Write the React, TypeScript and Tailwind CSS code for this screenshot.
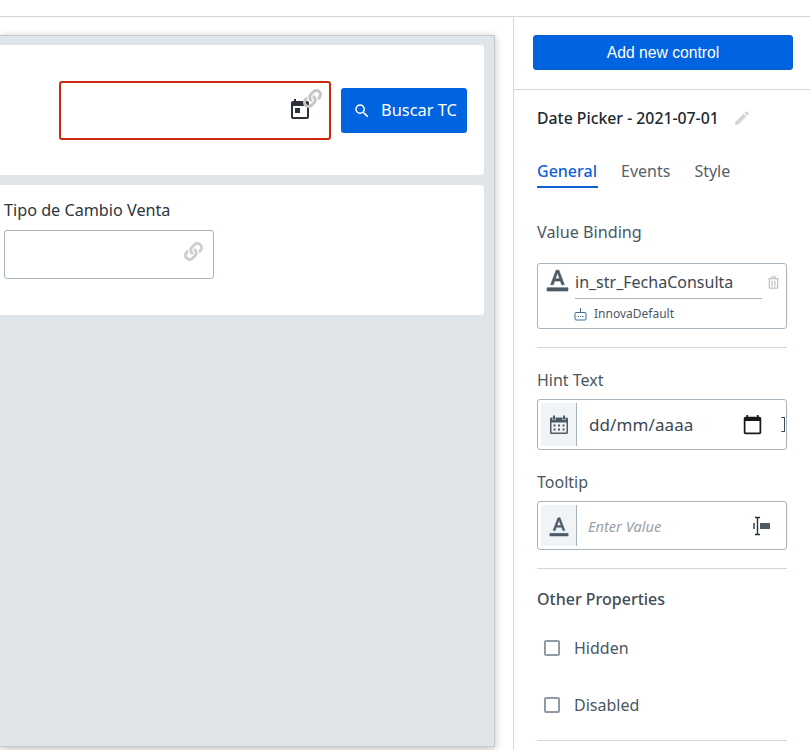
import { FaLink, FaRegTrashAlt } from 'react-icons/fa'
import { MdCalendarToday, MdEdit, MdSearch, MdToday } from 'react-icons/md'

function BotIcon() {
  return (
    <svg width="13" height="13" viewBox="0 0 13 13" fill="none" stroke="#3f6a94" strokeWidth="1">
      <path d="M6.5 0V4" />
      <rect x="1" y="4.5" width="11" height="7.5" rx="1" />
      <path d="M3.5 8.5H5M6 8.5H7M8 8.5H9.5" />
    </svg>
  )
}

function CalendarDots() {
  return (
    <svg width="20" height="20" viewBox="0 0 20 20" fill="#4d5a66">
      <rect x="4" y="0.5" width="2" height="4" />
      <rect x="14" y="0.5" width="2" height="4" />
      <path d="M2.5 2.5H3.5V5H6.5V2.5H13.5V5H16.5V2.5H17.5C18.3 2.5 19 3.2 19 4V17.5C19 18.3 18.3 19 17.5 19H2.5C1.7 19 1 18.3 1 17.5V4C1 3.2 1.7 2.5 2.5 2.5ZM2.5 7.5V17.5H17.5V7.5Z" />
      <path d="M4.5 9.5h2v2h-2zM9 9.5h2v2H9zM13.5 9.5h2v2h-2zM4.5 13.5h2v2h-2zM9 13.5h2v2H9zM13.5 13.5h2v2h-2z" />
    </svg>
  )
}

function CursorIcon() {
  return (
    <svg width="18" height="20" viewBox="0 0 18 20" fill="none">
      <rect x="7" y="7" width="10" height="6" fill="#4d5a66" />
      <path d="M2 1.5H4.5M7 1.5H4.5M4.5 1.5V18.5M2 18.5H7M1 7V13" stroke="#26323b" strokeWidth="1.4" />
    </svg>
  )
}

// text-colour icon, heavier than the stock one
function TextIcon({ size, weight }: { size: number; weight: number }) {
  return (
    <svg width={size} height={size} viewBox="0 0 24 24" fill="#4d5a66" stroke="#4d5a66" strokeWidth={weight} className="shrink-0">
      <path d="M2 20h20v3H2v-3zm3.49-3h2.42l1.27-3.58h5.65L16.09 17h2.42L13.25 3h-2.5L5.49 17zm4.42-5.61l2.03-5.79h.12l2.03 5.79H9.91z" />
    </svg>
  )
}

function Check({ label, className }: { label: string; className: string }) {
  return (
    <div className={`flex items-center gap-[14px] pl-[7px] ${className}`}>
      <span className="block size-4 rounded-[2px] border-2 border-[#8e9ba6] bg-white" />
      <span className="text-[16px] leading-5 text-[#4a5763]">{label}</span>
    </div>
  )
}

export default function App() {
  return (
    <div className="flex h-[750px] w-[810px] flex-col overflow-hidden bg-white font-['Noto_Sans','Open_Sans',sans-serif]">
      <div className="h-[17px] shrink-0 border-b border-[#cfd8e0]" />
      <div className="flex min-h-0 flex-1">
        <div className="w-[513px] shrink-0 pt-[18px]">
          <div className="flex h-[712px] w-[495px] flex-col gap-[10px] border-r border-b border-t border-[#c4c9cc] bg-[#dfe5e8] pr-[10px] pt-[9px] shadow-[0_2px_8px_rgba(0,0,0,0.25)]">
            <div className="flex h-[130px] items-center justify-end gap-[10px] rounded-r-[3px] bg-white pr-[17px]">
              <div className="relative h-[59px] w-[272px] rounded-[3px] border-2 border-[#c92a10]">
                <MdToday className="absolute left-[227px] top-[15px] size-[24px] text-[#2c3238]" />
                <FaLink className="absolute left-[242px] top-[6px] size-[19px] text-[#c6c6c6]" />
              </div>
              <button type="button" className="mt-px flex h-[45px] w-[126px] items-center rounded-[3px] bg-[#0063e0] pl-[12px] text-[16.4px] text-white">
                <MdSearch className="size-[18px]" />
                <span className="ml-[10px]">Buscar TC</span>
              </button>
            </div>
            <div className="h-[130px] rounded-r-[3px] bg-white pl-[4px] pt-[14px]">
              <div className="text-[16.2px] leading-[22px] text-[#2b3640]">Tipo de Cambio Venta</div>
              <div className="relative mt-[9px] h-[49px] w-[210px] rounded-[3px] border border-[#a8b4bd]">
                <FaLink className="absolute right-[10px] top-[11px] size-[19px] text-[#cfcfcf]" />
              </div>
            </div>
          </div>
        </div>

        <aside className="w-[297px] shrink-0 border-l border-[#cfd8e0]">
          <div className="h-[73px] border-b border-[#cfd8e0] pl-[19px] pt-[18px]">
            <button type="button" className="h-[35px] w-[260px] rounded-[3px] border border-[#0a5fcf] bg-[#0063e0] font-['Liberation_Sans',sans-serif] text-[15.7px] text-white">
              Add new control
            </button>
          </div>

          <div className="px-[23px]">
            <div className="mt-[18px] flex items-center">
              <span className="text-[15.8px] font-medium leading-5 text-[#20282f]">Date Picker - 2021-07-01</span>
              <MdEdit className="ml-[14px] size-[18px] text-[#d4d4d4]" />
            </div>

            <div className="mt-[32px] flex gap-[24px] text-[16px] leading-[22px] text-[#56616b]">
              <div className="-mr-px h-[28px] w-[61px] border-b-2 border-[#0f5fd7] font-medium text-[#0f5fd7]">General</div>
              <div>Events</div>
              <div>Style</div>
            </div>

            <div className="mt-[33px] text-[16.2px] leading-[22px] text-[#4a5763]">Value Binding</div>

            <div className="mt-[20px] h-[66px] w-[250px] rounded-[3px] border border-[#a8b4bd] px-[7px] pt-[3px]">
              <div className="flex items-start">
                <TextIcon size={25} weight={0.7} />
                <div className="ml-[5px] h-[32px] w-[187px] shrink-0 border-b border-[#a8b4bd] pr-0 text-[16px] leading-[30px] text-[#3d4853]">
                  in_str_FechaConsulta
                </div>
                <FaRegTrashAlt className="ml-[6px] mt-[9px] size-[13px] text-[#b9bfc4]" />
              </div>
              <div className="ml-[29px] mt-[7px] flex items-center gap-[7px] text-[12px] leading-4 text-[#4a5763]">
                <BotIcon />
                InnovaDefault
              </div>
            </div>

            <div className="mt-[18px] h-px w-[250px] bg-[#cfd8e0]" />

            <div className="mt-[21px] text-[16px] leading-[22px] text-[#4a5763]">Hint Text</div>

            <div className="mt-[8px] flex h-[51px] w-[250px] overflow-hidden rounded-[3px] border border-[#a8b4bd] p-[3px] pr-0">
              <div className="flex w-[36px] shrink-0 items-center justify-center border-r border-[#a8b4bd] bg-[#f0f4f6]">
                <CalendarDots />
              </div>
              <div className="flex flex-1 items-center pl-[12px] text-[17px] text-[#3d4853]">
                <span className="tracking-[0.1px]">dd/mm/aaaa</span>
                <MdCalendarToday className="ml-[48px] size-[21px] shrink-0 text-[#15191c]" />
                <span className="ml-[18px] h-[15px] w-[4px] shrink-0 rounded-[1px] border-y border-r border-[#3d4853]" />
              </div>
            </div>

            <div className="mt-[21px] text-[16px] leading-[22px] text-[#4a5763]">Tooltip</div>

            <div className="mt-[8px] flex h-[49px] w-[250px] rounded-[3px] border border-[#a8b4bd] p-[3px] pr-0">
              <div className="flex w-[36px] items-center justify-center border-r border-[#a8b4bd] bg-[#f0f4f6]">
                <TextIcon size={22} weight={0.5} />
              </div>
              <div className="flex flex-1 items-center pl-[11px] pr-[15px]">
                <span className="mt-[2px] flex-1 text-[14.6px] italic text-[#9aa1a7]">Enter Value</span>
                <CursorIcon />
              </div>
            </div>

            <div className="mt-[18px] h-px w-[250px] bg-[#cfd8e0]" />

            <div className="mt-[19px] text-[16px] font-medium leading-[22px] text-[#414d58]">Other Properties</div>

            <Check label="Hidden" className="mt-[28px]" />
            <Check label="Disabled" className="mt-[37px]" />

            <div className="mt-[25px] h-px w-[250px] bg-[#cfd8e0]" />
          </div>
        </aside>
      </div>
    </div>
  )
}
